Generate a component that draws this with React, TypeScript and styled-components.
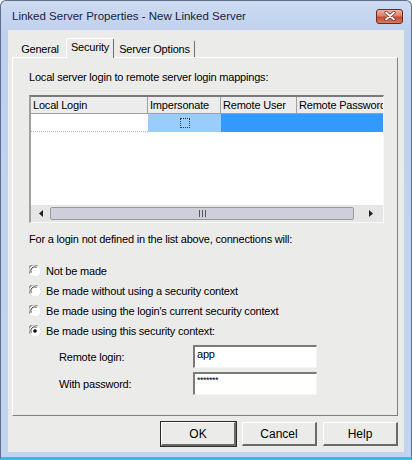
import React from 'react';
import styled, { createGlobalStyle } from 'styled-components';

const Global = createGlobalStyle`
  html, body { margin: 0; padding: 0; background: #fff; }
  body {
    font-family: "Liberation Sans", Arial, sans-serif;
    font-size: 11px;
    letter-spacing: -0.2px;
    color: #000;
  }
  * { box-sizing: border-box; }
`;

const Window = styled.div`
  width: 412px;
  height: 460px;
  display: flex;
  flex-direction: column;
  background: linear-gradient(#cddbf1, #bfd1ee 30px, #c2d4ef);
  border: 1px solid #5d6f8c;
  border-bottom: 3px solid #3bb9df;
  border-radius: 6px 6px 0 0;
  padding: 0 7px 5px 7px;
`;

const TitleBar = styled.div`
  height: 29px;
  display: flex;
  align-items: center;
  justify-content: space-between;
  padding: 0 1px 0 4px;
  font-size: 11.5px;
  letter-spacing: 0;
  color: #1c1c3a;
`;

const CloseBtn = styled.div`
  width: 27px;
  height: 15px;
  margin-top: 1px;
  border: 1px solid #6d2a1f;
  border-radius: 3px;
  background: linear-gradient(#eab2a4, #d9826d 45%, #c04a33 55%, #d77b5f);
  display: flex;
  align-items: center;
  justify-content: center;
`;

const Client = styled.div`
  flex: 1;
  display: flex;
  flex-direction: column;
  background: #ebebea;
  padding: 8px 6px 6px 4px;
`;

const TabRow = styled.div`
  display: flex;
  align-items: flex-end;
  height: 19px;
  padding-left: 2px;
  position: relative;
  z-index: 1;
`;

const Tab = styled.div<{ w: number; selected?: boolean; edge?: boolean }>`
  width: ${p => p.w}px;
  height: ${p => (p.selected ? 20 : 17)}px;
  margin-bottom: ${p => (p.selected ? -1 : 0)}px;
  display: flex;
  align-items: center;
  justify-content: center;
  background: #ebebea;
  border-top: 1px solid ${p => (p.selected ? '#fff' : 'transparent')};
  border-left: 1px solid ${p => (p.selected ? '#fff' : 'transparent')};
  border-right: 1px solid ${p => (p.selected || p.edge ? '#6f6f6f' : 'transparent')};
  border-radius: 2px 2px 0 0;
  padding-bottom: ${p => (p.selected ? 3 : 0)}px;
`;

const Panel = styled.div`
  flex: 1;
  display: flex;
  flex-direction: column;
  border-top: 1px solid #fff;
  border-left: 1px solid #fff;
  border-right: 1px solid #7f7f7f;
  border-bottom: 1px solid #7f7f7f;
  padding: 13px 0 0 16px;
`;

const Label = styled.div<{ gapTop?: number }>`
  height: 13px;
  line-height: 13px;
  white-space: nowrap;
  margin-top: ${p => p.gapTop ?? 0}px;
`;

const Grid = styled.div`
  width: 355px;
  height: 128px;
  margin-top: 11px;
  display: flex;
  flex-direction: column;
  border-style: solid;
  border-width: 2px 1px 1px 2px;
  border-color: #7a7a7a #f8f8f8 #f8f8f8 #a0a0a0;
  background: #fff;
`;

const HeaderRow = styled.div`
  display: flex;
  height: 17px;
  background: #ececec;
  border-bottom: 1px solid #a0a0a0;
`;

const HeadCell = styled.div<{ w: number }>`
  width: ${p => p.w}px;
  flex-shrink: 0;
  padding-left: 2px;
  line-height: 16px;
  border-right: 1px solid #a0a0a0;
  overflow: hidden;
  white-space: nowrap;
  &:last-child { border-right: none; flex: 1; width: auto; }
`;

const DataRow = styled.div`
  display: flex;
  height: 18px;
`;

const Cell = styled.div<{ w: number; tone: 'plain' | 'light' | 'sel' }>`
  width: ${p => p.w}px;
  flex-shrink: 0;
  display: flex;
  align-items: center;
  justify-content: center;
  background: ${p => (p.tone === 'sel' ? '#3399ff' : p.tone === 'light' ? '#99ccff' : '#fff')};
  border-bottom: 1px dotted ${p => (p.tone === 'plain' ? '#b8b8b8' : 'transparent')};
  &:last-child { flex: 1; width: auto; }
`;

const CheckMark = styled.div`
  width: 10px;
  height: 10px;
  border: 1px dotted #2a3f6a;
`;

const GridBody = styled.div`
  flex: 1;
`;

const HScroll = styled.div`
  height: 17px;
  display: flex;
  align-items: center;
  background: #e6e6e6;
  padding: 0 6px 0 4px;
`;

const Arrow = styled.div`
  width: 12px;
  display: flex;
  align-items: center;
  justify-content: center;
`;

const Thumb = styled.div`
  width: 304px;
  height: 13px;
  margin-left: 3px;
  border: 1px solid #9a9a9a;
  border-radius: 2px;
  background: #cfcfdc;
  display: flex;
  align-items: center;
  justify-content: center;
`;

const Track = styled.div`
  flex: 1;
  display: flex;
  justify-content: flex-end;
`;

const Options = styled.div`
  margin-top: 15px;
  display: flex;
  flex-direction: column;
`;

const OptionRow = styled.label`
  height: 20px;
  display: flex;
  align-items: center;
  gap: 5px;
  white-space: nowrap;
`;

const Fields = styled.div`
  margin-top: 4px;
  padding-left: 30px;
  display: flex;
  flex-direction: column;
  gap: 4px;
`;

const FieldRow = styled.div`
  display: flex;
  align-items: center;
`;

const FieldLabel = styled.div`
  width: 134px;
`;

const Input = styled.div`
  width: 124px;
  height: 23px;
  background: #fff;
  border-style: solid;
  border-width: 2px 1px 1px 2px;
  border-color: #7a7a7a #f4f4f4 #f4f4f4 #7a7a7a;
  padding: 1px 0 0 2px;
  line-height: 13px;
`;

const Stars = styled.span`
  font-size: 9px;
  letter-spacing: -0.5px;
  position: relative;
  top: -2px;
`;

const ButtonBar = styled.div`
  display: flex;
  justify-content: flex-end;
  gap: 6px;
  margin-top: 6px;
`;

const Button = styled.div<{ primary?: boolean }>`
  width: 75px;
  height: 24px;
  display: flex;
  align-items: center;
  justify-content: center;
  font-size: 12px;
  letter-spacing: 0;
  background: #ebebea;
  border-style: solid;
  border-width: 1px 2px 2px 1px;
  border-color: #fff #6a6a6a #6a6a6a #fff;
  outline: ${p => (p.primary ? '1px solid #2a2a2a' : 'none')};
  outline-offset: 0;
`;

const Radio = ({ checked }: { checked?: boolean }) => (
  <svg width="12" height="12" viewBox="0 0 12 12">
    <circle cx="6" cy="6" r="5.5" fill="#fff" />
    <path d="M1.2 8.5 A5 5 0 0 1 8.5 1.2" fill="none" stroke="#8a8a8a" strokeWidth="1.2" />
    <path d="M2.3 7.6 A3.9 3.9 0 0 1 7.6 2.3" fill="none" stroke="#3c3c3c" strokeWidth="1" />
    <path d="M10.8 3.5 A5 5 0 0 1 3.5 10.8" fill="none" stroke="#e2e2e2" strokeWidth="1" />
    {checked && <circle cx="6" cy="6" r="1.8" fill="#000" />}
  </svg>
);

const options = [
  'Not be made',
  'Be made without using a security context',
  "Be made using the login's current security context",
  'Be made using this security context:',
];

const cols = [117, 73, 76, 86];
const heads = ['Local Login', 'Impersonate', 'Remote User', 'Remote Password'];

export default function App() {
  return (
    <>
      <Global />
      <Window>
        <TitleBar>
          <span>Linked Server Properties - New Linked Server</span>
          <CloseBtn>
            <svg width="12" height="10" viewBox="0 0 12 10">
              <path d="M2 1.5 L10 8.5 M10 1.5 L2 8.5" stroke="#6b2a1e" strokeWidth="3.2" strokeLinecap="round" />
              <path d="M2 1.5 L10 8.5 M10 1.5 L2 8.5" stroke="#fff" strokeWidth="1.8" strokeLinecap="round" />
            </svg>
          </CloseBtn>
        </TitleBar>
        <Client>
          <TabRow>
            <Tab w={52}>General</Tab>
            <Tab w={48} selected>Security</Tab>
            <Tab w={81} edge>Server Options</Tab>
          </TabRow>
          <Panel>
            <Label>Local server login to remote server login mappings:</Label>
            <Grid>
              <HeaderRow>
                {heads.map((h, i) => (
                  <HeadCell key={h} w={cols[i]}>{h}</HeadCell>
                ))}
              </HeaderRow>
              <DataRow>
                <Cell w={cols[0]} tone="plain" />
                <Cell w={cols[1]} tone="light"><CheckMark /></Cell>
                <Cell w={cols[2]} tone="sel" />
                <Cell w={cols[3]} tone="sel" />
              </DataRow>
              <GridBody />
              <HScroll>
                <Arrow>
                  <svg width="4" height="7" viewBox="0 0 4 7"><path d="M4 0 L0 3.5 L4 7 Z" fill="#222" /></svg>
                </Arrow>
                <Thumb>
                  <svg width="7" height="7" viewBox="0 0 7 7">
                    <path d="M0.5 0 V7 M3.5 0 V7 M6.5 0 V7" stroke="#555" strokeWidth="1" />
                  </svg>
                </Thumb>
                <Track>
                  <Arrow>
                    <svg width="4" height="7" viewBox="0 0 4 7"><path d="M0 0 L4 3.5 L0 7 Z" fill="#222" /></svg>
                  </Arrow>
                </Track>
              </HScroll>
            </Grid>
            <Label gapTop={10}>For a login not defined in the list above, connections will:</Label>
            <Options>
              {options.map((o, i) => (
                <OptionRow key={o}>
                  <Radio checked={i === 3} />
                  {o}
                </OptionRow>
              ))}
            </Options>
            <Fields>
              <FieldRow>
                <FieldLabel>Remote login:</FieldLabel>
                <Input>app</Input>
              </FieldRow>
              <FieldRow>
                <FieldLabel>With password:</FieldLabel>
                <Input><Stars>*******</Stars></Input>
              </FieldRow>
            </Fields>
          </Panel>
          <ButtonBar>
            <Button primary>OK</Button>
            <Button>Cancel</Button>
            <Button>Help</Button>
          </ButtonBar>
        </Client>
      </Window>
    </>
  );
}
